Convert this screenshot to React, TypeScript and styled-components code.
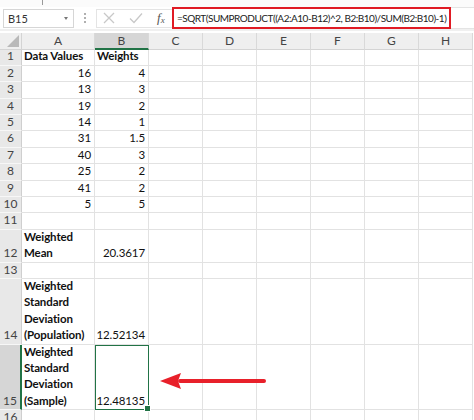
import React from "react";
import styled, { createGlobalStyle } from "styled-components";

const GlobalStyle = createGlobalStyle`
  html, body {
    margin: 0;
    padding: 0;
    background: #ffffff;
  }
  body {
    font-family: Lato, "Open Sans", "Liberation Sans", sans-serif;
  }
`;

const LINE = 16.4;
const columns = ["A", "B", "C", "D", "E", "F", "G", "H"];

interface IRow {
  n: number;
  lines: number;
  a?: string;
  b?: string;
  boldA?: boolean;
  boldB?: boolean;
  numA?: boolean;
}

const rows: IRow[] = [
  { n: 1, lines: 1, a: "Data Values", b: "Weights", boldA: true, boldB: true },
  { n: 2, lines: 1, a: "16", b: "4", numA: true },
  { n: 3, lines: 1, a: "13", b: "3", numA: true },
  { n: 4, lines: 1, a: "19", b: "2", numA: true },
  { n: 5, lines: 1, a: "14", b: "1", numA: true },
  { n: 6, lines: 1, a: "31", b: "1.5", numA: true },
  { n: 7, lines: 1, a: "40", b: "3", numA: true },
  { n: 8, lines: 1, a: "25", b: "2", numA: true },
  { n: 9, lines: 1, a: "41", b: "2", numA: true },
  { n: 10, lines: 1, a: "5", b: "5", numA: true },
  { n: 11, lines: 1 },
  { n: 12, lines: 2, a: "Weighted\nMean", b: "20.3617", boldA: true },
  { n: 13, lines: 1 },
  {
    n: 14,
    lines: 4,
    a: "Weighted\nStandard\nDeviation\n(Population)",
    b: "12.52134",
    boldA: true,
  },
  {
    n: 15,
    lines: 4,
    a: "Weighted\nStandard\nDeviation\n(Sample)",
    b: "12.48135",
    boldA: true,
  },
  { n: 16, lines: 1 },
];

export default function App() {
  return (
    <Page>
      <GlobalStyle />
      <TopStrip>
        <Tick />
      </TopStrip>
      <FormulaBar>
        <NameBox>
          <span>B15</span>
          <Caret />
        </NameBox>
        <Grip>
          <i />
          <i />
          <i />
        </Grip>
        <Actions>
          <svg width="12" height="12" viewBox="0 0 12 12">
            <path d="M1 1 L11 11 M11 1 L1 11" stroke="#c8c8c8" strokeWidth="1.3" fill="none" />
          </svg>
          <svg width="14" height="12" viewBox="0 0 14 12">
            <path d="M1 6.5 L5 10.5 L13 1.5" stroke="#c8c8c8" strokeWidth="1.3" fill="none" />
          </svg>
          <Fx>
            f<sub>x</sub>
          </Fx>
        </Actions>
        <FormulaInput>
          <FormulaText>
            =SQRT(SUMPRODUCT((A2:A10-B12)^2, B2:B10)/SUM(B2:B10)-1)
          </FormulaText>
        </FormulaInput>
      </FormulaBar>
      <Sheet>
        <Corner>
          <svg width="12" height="12" viewBox="0 0 12 12">
            <path d="M12 0 L12 12 L0 12 Z" fill="#b9b9b9" />
          </svg>
        </Corner>
        {columns.map((c) => (
          <ColHeader key={c} $active={c === "B"}>
            {c}
          </ColHeader>
        ))}
        {rows.map((r) => {
          const h = r.lines * LINE;
          const active = r.n === 15;
          return (
            <React.Fragment key={r.n}>
              <RowHeader $h={h} $active={active}>
                {r.n}
              </RowHeader>
              <Cell $h={h} $bold={r.boldA} $right={r.numA}>
                {r.a}
              </Cell>
              <Cell $h={h} $bold={r.boldB} $right={!r.boldB} $selected={active}>
                {r.b}
                {active && <Handle />}
              </Cell>
              {columns.slice(2).map((c) => (
                <Cell key={c} $h={h} />
              ))}
            </React.Fragment>
          );
        })}
        <Arrow width="108" height="20" viewBox="0 0 108 20">
          <path d="M20 10 L104 10" stroke="#e8202a" strokeWidth="4" strokeLinecap="round" />
          <path d="M0 10 L21 2 L18 10 L21 18 Z" fill="#e8202a" />
        </Arrow>
      </Sheet>
    </Page>
  );
}

const Page = styled.div`
  width: 474px;
  height: 420px;
  overflow: hidden;
  background: #ffffff;
`;

const TopStrip = styled.div`
  height: 7px;
  background: #fbfbfb;
  position: relative;
`;

const Tick = styled.div`
  position: absolute;
  left: 42px;
  top: 0;
  width: 1px;
  height: 5px;
  background: #9a9a9a;
`;

const FormulaBar = styled.div`
  height: 24px;
  display: flex;
  align-items: center;
  background: #ffffff;
  border-bottom: 2px solid #f0f0f0;
  box-sizing: border-box;
`;

const NameBox = styled.div`
  margin-left: 3px;
  width: 71px;
  height: 19px;
  box-sizing: border-box;
  border: 1px solid #d6d6d6;
  display: flex;
  align-items: center;
  justify-content: space-between;
  padding: 0 5px 0 4px;
  font-size: 11px;
  color: #333;
`;

const Caret = styled.span`
  width: 0;
  height: 0;
  border-left: 2.5px solid transparent;
  border-right: 2.5px solid transparent;
  border-top: 3px solid #777;
`;

const Grip = styled.div`
  width: 22px;
  display: flex;
  flex-direction: column;
  align-items: center;
  gap: 2px;
  & > i {
    width: 2px;
    height: 2px;
    background: #b0b0b0;
  }
`;

const Actions = styled.div`
  width: 76px;
  height: 19px;
  display: flex;
  align-items: center;
  gap: 14px;
  padding-left: 6px;
  box-sizing: border-box;
  border: 1px solid #e4e4e4;
  border-right: none;
`;

const Fx = styled.span`
  font-family: "Liberation Serif", serif;
  font-style: italic;
  font-size: 13px;
  color: #555;
  & > sub {
    font-size: 9px;
    vertical-align: -1px;
  }
`;

const FormulaInput = styled.div`
  flex: 1;
  height: 22px;
  display: flex;
  align-items: center;
  border-top: 1px solid #e4e4e4;
  border-bottom: 1px solid #e4e4e4;
  box-sizing: border-box;
  position: relative;
`;

const FormulaText = styled.div`
  width: 279px;
  height: 22px;
  box-sizing: border-box;
  border: 2px solid #e01b24;
  display: flex;
  align-items: center;
  padding-left: 3px;
  font-size: 10px;
  letter-spacing: -0.48px;
  color: #222;
  white-space: nowrap;
`;

const Sheet = styled.div`
  position: relative;
  display: grid;
  grid-template-columns: 22px 73px repeat(7, 54px);
  margin-top: 2px;
`;

const Corner = styled.div`
  height: 16.5px;
  background: #efefef;
  border-right: 1px solid #d4d4d4;
  border-bottom: 1px solid #d4d4d4;
  box-sizing: border-box;
  display: flex;
  align-items: flex-end;
  justify-content: flex-end;
  padding: 0 2px 2px 0;
`;

const ColHeader = styled.div<{ $active?: boolean }>`
  height: 16.5px;
  box-sizing: border-box;
  background: ${(p) => (p.$active ? "#d6d6d6" : "#efefef")};
  border-right: 1px solid #d9d9d9;
  border-bottom: ${(p) => (p.$active ? "2px solid #217346" : "1px solid #d4d4d4")};
  text-align: center;
  font-size: 12px;
  line-height: 16px;
  color: #444;
`;

const RowHeader = styled.div<{ $h: number; $active?: boolean }>`
  height: ${(p) => p.$h}px;
  box-sizing: border-box;
  background: ${(p) => (p.$active ? "#d6d6d6" : "#e8e8e8")};
  border-bottom: 1px solid #f7f7f7;
  border-right: ${(p) => (p.$active ? "2px solid #217346" : "1px solid #cfcfcf")};
  display: flex;
  align-items: flex-end;
  justify-content: center;
  font-size: 12px;
  line-height: ${LINE}px;
  color: #444;
`;

const Cell = styled.div<{
  $h: number;
  $bold?: boolean;
  $right?: boolean;
  $selected?: boolean;
}>`
  position: relative;
  height: ${(p) => p.$h}px;
  box-sizing: border-box;
  border-right: 1px solid #e2e2e2;
  border-bottom: 1px solid #e2e2e2;
  padding: 0 3px 0 2px;
  display: flex;
  align-items: flex-end;
  justify-content: ${(p) => (p.$right ? "flex-end" : "flex-start")};
  white-space: pre-line;
  font-size: 11.5px;
  letter-spacing: -0.1px;
  line-height: ${LINE}px;
  font-weight: ${(p) => (p.$bold ? 700 : 400)};
  color: #111;
  ${(p) =>
    p.$selected &&
    `
    outline: 1.5px solid #217346;
    outline-offset: -1px;
    z-index: 1;
  `}
`;

const Handle = styled.span`
  position: absolute;
  right: -3px;
  bottom: -3px;
  width: 5px;
  height: 5px;
  background: #217346;
  border: 1px solid #ffffff;
`;

const Arrow = styled.svg`
  position: absolute;
  left: 160px;
  top: 338px;
  z-index: 2;
`;
